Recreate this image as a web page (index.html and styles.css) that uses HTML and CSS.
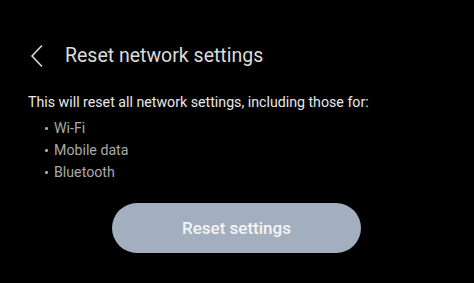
FILE: index.html
```html
<!DOCTYPE html>
<html>
<head>
<meta charset="utf-8">
<link rel="stylesheet" href="styles.css">
</head>
<body>
<div class="screen">
  <header class="header">
    <svg class="back" width="14" height="22" viewBox="0 0 14 22"><path d="M11.5 1 L2 11 L11.5 21" fill="none" stroke="#dcdcdc" stroke-width="1.6" stroke-linecap="round" stroke-linejoin="round"/></svg>
    <h1 class="title">Reset network settings</h1>
  </header>
  <p class="desc">This will reset all network settings, including those for:</p>
  <ul class="list">
    <li>Wi-Fi</li>
    <li>Mobile data</li>
    <li>Bluetooth</li>
  </ul>
  <div class="actions">
    <button class="reset-btn">Reset settings</button>
  </div>
</div>
</body>
</html>
```
FILE: styles.css
```css
html, body {
  margin: 0;
  padding: 0;
  background: #000;
}
.screen {
  width: 474px;
  height: 283px;
  overflow: hidden;
  font-family: Roboto, "Liberation Sans", sans-serif;
  padding-top: 44px;
  box-sizing: border-box;
}
.header {
  display: flex;
  align-items: center;
  height: 24px;
  padding-left: 30px;
}
.back {
  display: block;
  width: 14px;
  height: 22px;
}
.title {
  margin: 0 0 0 21px;
  font-size: 19.5px;
  line-height: 24px;
  font-weight: 400;
  color: #dcdcdc;
}
.desc {
  margin: 23px 0 0 28px;
  font-size: 14.2px;
  line-height: 22px;
  color: #e8e8e8;
}
.list {
  list-style: none;
  margin: 4px 0 0 0;
  padding: 0 0 0 45px;
  font-size: 14.2px;
  line-height: 22px;
  color: #a9a9a9;
}
.list li {
  display: flex;
  align-items: center;
}
.list li::before {
  content: "";
  width: 2.5px;
  height: 2.5px;
  border-radius: 50%;
  background: #a9a9a9;
  margin-right: 6.5px;
  margin-top: 1px;
}
.actions {
  margin-top: 20px;
  padding-left: 112px;
}
.reset-btn {
  display: block;
  width: 249px;
  height: 50px;
  border: none;
  border-radius: 25px;
  background: #a3aebf;
  color: #f4f4f4;
  font-family: Roboto, "Liberation Sans", sans-serif;
  font-size: 17px;
  font-weight: 500;
  padding: 0;
}
```
